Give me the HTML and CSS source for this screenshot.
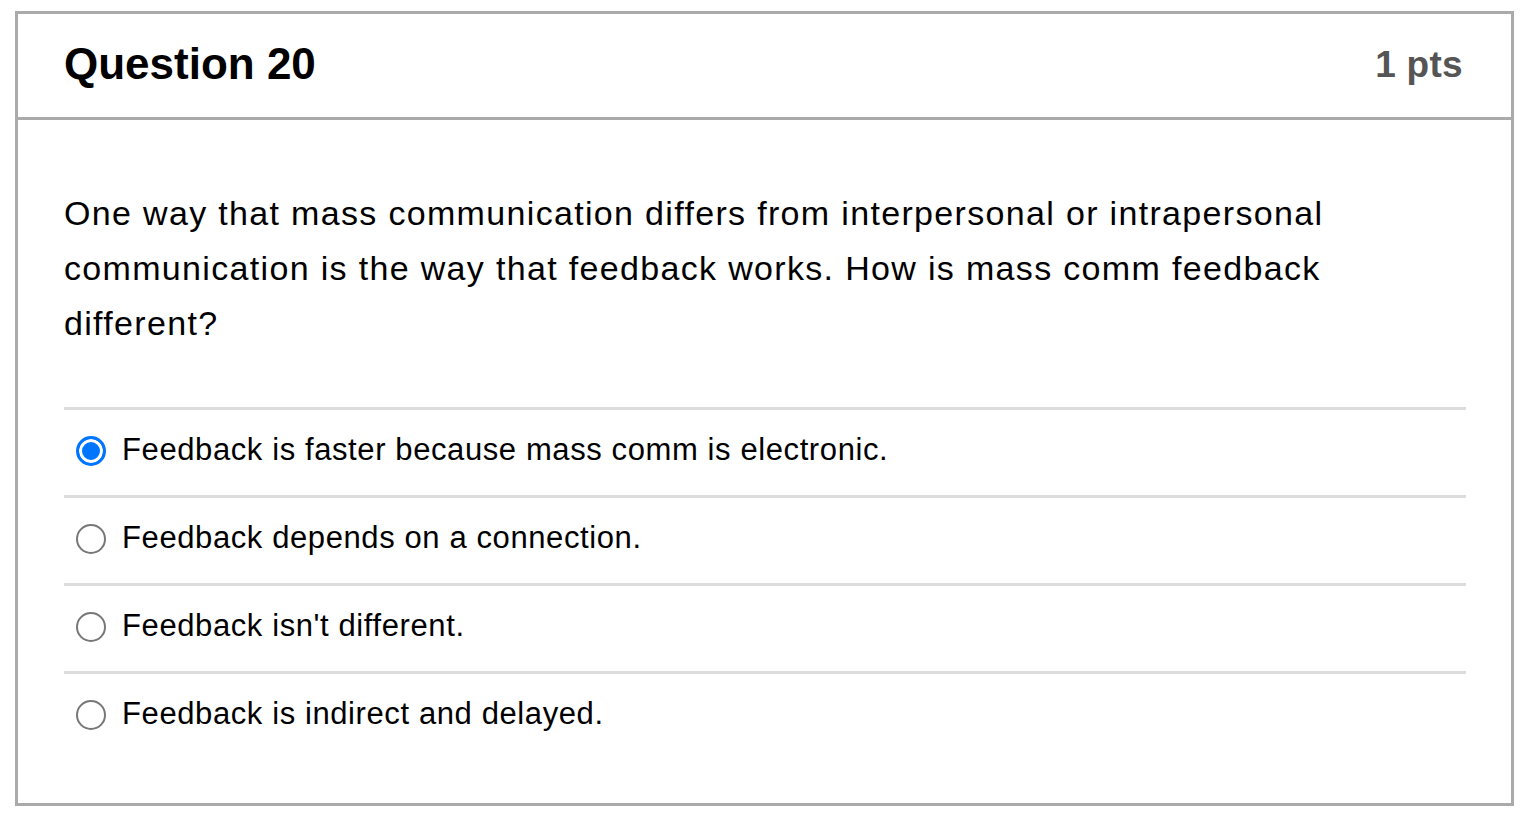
FILE: index.html
```html
<!DOCTYPE html>
<html>
<head>
<meta charset="utf-8">
<link rel="stylesheet" href="styles.css">
</head>
<body>
<div class="question">
  <div class="q-header">
    <h2 class="q-title">Question 20</h2>
    <span class="q-points">1 pts</span>
  </div>
  <div class="q-body">
    <p class="q-text">One way that mass communication differs from interpersonal or intrapersonal communication is the way that feedback works. How is mass comm feedback different?</p>
    <div class="answers">
      <label class="answer"><span class="radio checked"></span><span class="answer-text">Feedback is faster because mass comm is electronic.</span></label>
      <label class="answer"><span class="radio"></span><span class="answer-text">Feedback depends on a connection.</span></label>
      <label class="answer"><span class="radio"></span><span class="answer-text">Feedback isn't different.</span></label>
      <label class="answer"><span class="radio"></span><span class="answer-text">Feedback is indirect and delayed.</span></label>
    </div>
  </div>
</div>
</body>
</html>
```

FILE: styles.css
```css
html, body {
  margin: 0;
  padding: 0;
  background: #fff;
}
body {
  font-family: "Liberation Sans", Arial, sans-serif;
  color: #000;
}
.question {
  box-sizing: border-box;
  margin: 11px 0 0 15px;
  width: 1499px;
  height: 795px;
  border: 3px solid #aaaaaa;
  display: flex;
  flex-direction: column;
}
.q-header {
  box-sizing: border-box;
  height: 106px;
  border-bottom: 3px solid #aaaaaa;
  display: flex;
  align-items: center;
  justify-content: space-between;
  padding: 0 48px 4px 46px;
}
.q-title {
  margin: 0;
  font-size: 44px;
  font-weight: bold;
  line-height: 50px;
  color: #000;
}
.q-points {
  font-size: 37px;
  font-weight: bold;
  line-height: 50px;
  color: #555555;
  padding-top: 2px;
  letter-spacing: 0.3px;
}
.q-body {
  padding: 66px 45px 0 46px;
}
.q-text {
  margin: 0;
  max-width: 1320px;
  font-size: 34px;
  line-height: 55px;
  letter-spacing: 1.33px;
}
.answers {
  margin-top: 56px;
}
.answer {
  box-sizing: border-box;
  height: 88px;
  border-top: 3px solid #dddddd;
  display: flex;
  align-items: center;
  padding-left: 12px;
  padding-bottom: 3px;
}
.radio {
  box-sizing: border-box;
  flex: none;
  width: 30px;
  height: 30px;
  border-radius: 50%;
  border: 2.5px solid #777777;
  background: #fff;
  margin-right: 16px;
}
.radio.checked {
  border: 3px solid #0075ff;
  box-shadow: inset 0 0 0 3px #fff;
  background: #0075ff;
}
.answer-text {
  font-size: 31px;
  line-height: 40px;
  letter-spacing: 0.6px;
  margin-top: -2px;
}
```
